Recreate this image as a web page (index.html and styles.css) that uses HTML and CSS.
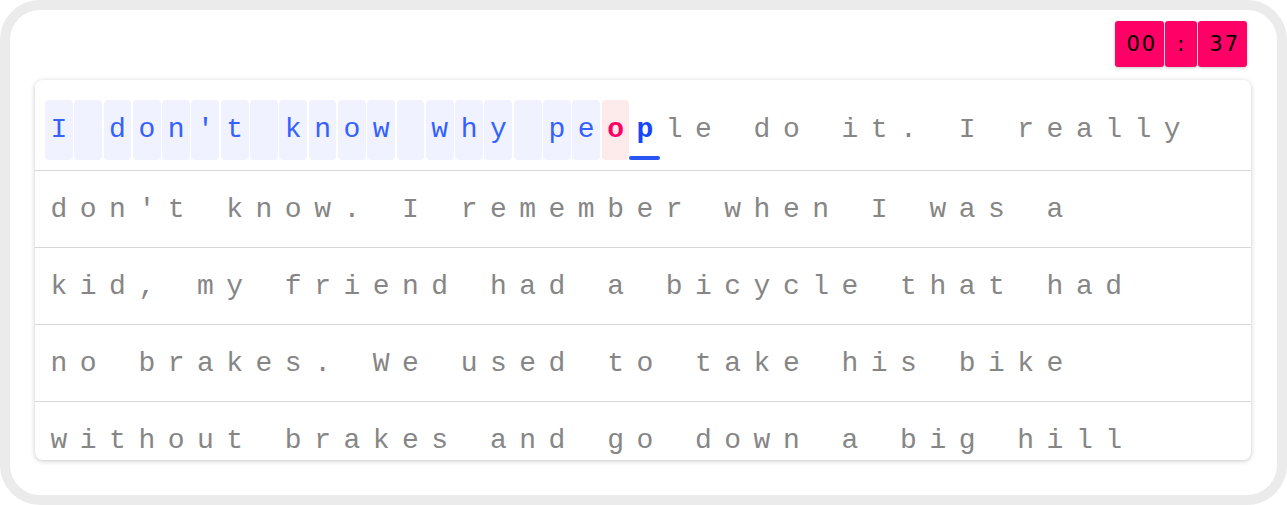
FILE: index.html
```html
<!DOCTYPE html>
<html lang="en">
<head>
<meta charset="utf-8">
<title>Typing test</title>
<link rel="stylesheet" href="styles.css">
</head>
<body>
<div class="frame">
  <div class="header">
    <div class="timer">
      <span class="seg">00</span>
      <span class="seg colon">:</span>
      <span class="seg">37</span>
    </div>
  </div>
  <div class="card">
    <div class="row first"><span class="done">I</span><span class="done"> </span><span class="done">d</span><span class="done">o</span><span class="done">n</span><span class="done">'</span><span class="done">t</span><span class="done"> </span><span class="done">k</span><span class="done">n</span><span class="done">o</span><span class="done">w</span><span class="done"> </span><span class="done">w</span><span class="done">h</span><span class="done">y</span><span class="done"> </span><span class="done">p</span><span class="done">e</span><span class="wrong">o</span><span class="current">p</span><span>l</span><span>e</span><span> </span><span>d</span><span>o</span><span> </span><span>i</span><span>t</span><span>.</span><span> </span><span>I</span><span> </span><span>r</span><span>e</span><span>a</span><span>l</span><span>l</span><span>y</span></div>
    <div class="row"><span>d</span><span>o</span><span>n</span><span>'</span><span>t</span><span> </span><span>k</span><span>n</span><span>o</span><span>w</span><span>.</span><span> </span><span>I</span><span> </span><span>r</span><span>e</span><span>m</span><span>e</span><span>m</span><span>b</span><span>e</span><span>r</span><span> </span><span>w</span><span>h</span><span>e</span><span>n</span><span> </span><span>I</span><span> </span><span>w</span><span>a</span><span>s</span><span> </span><span>a</span></div>
    <div class="row"><span>k</span><span>i</span><span>d</span><span>,</span><span> </span><span>m</span><span>y</span><span> </span><span>f</span><span>r</span><span>i</span><span>e</span><span>n</span><span>d</span><span> </span><span>h</span><span>a</span><span>d</span><span> </span><span>a</span><span> </span><span>b</span><span>i</span><span>c</span><span>y</span><span>c</span><span>l</span><span>e</span><span> </span><span>t</span><span>h</span><span>a</span><span>t</span><span> </span><span>h</span><span>a</span><span>d</span></div>
    <div class="row"><span>n</span><span>o</span><span> </span><span>b</span><span>r</span><span>a</span><span>k</span><span>e</span><span>s</span><span>.</span><span> </span><span>W</span><span>e</span><span> </span><span>u</span><span>s</span><span>e</span><span>d</span><span> </span><span>t</span><span>o</span><span> </span><span>t</span><span>a</span><span>k</span><span>e</span><span> </span><span>h</span><span>i</span><span>s</span><span> </span><span>b</span><span>i</span><span>k</span><span>e</span></div>
    <div class="row"><span>w</span><span>i</span><span>t</span><span>h</span><span>o</span><span>u</span><span>t</span><span> </span><span>b</span><span>r</span><span>a</span><span>k</span><span>e</span><span>s</span><span> </span><span>a</span><span>n</span><span>d</span><span> </span><span>g</span><span>o</span><span> </span><span>d</span><span>o</span><span>w</span><span>n</span><span> </span><span>a</span><span> </span><span>b</span><span>i</span><span>g</span><span> </span><span>h</span><span>i</span><span>l</span><span>l</span></div>
  </div>
</div>
</body>
</html>
```
FILE: styles.css
```css
* { box-sizing: border-box; }
html, body { margin: 0; padding: 0; background: #ffffff; }
.frame {
  width: 1287px;
  height: 505px;
  border: 10px solid #ebebeb;
  border-radius: 40px;
  background: #ffffff;
  padding: 0 26px 0 25px;
  overflow: hidden;
}
.header {
  display: flex;
  justify-content: flex-end;
  padding: 11px 4px 0 0;
  margin-bottom: 13px;
}
.timer { display: flex; gap: 1px; }
.seg {
  height: 46px;
  line-height: 46px;
  padding: 0 7px 0 11px;
  background: #ff0066;
  color: #000;
  font-family: "DejaVu Sans", Verdana, sans-serif;
  font-size: 21px;
  letter-spacing: 2px;
  border-radius: 3px;
  box-shadow: 0 1px 3px rgba(0,0,0,0.22);
}
.seg.colon { padding: 0 11px 0 12px; }
.card {
  height: 380px;
  border-radius: 8px;
  background: #fff;
  box-shadow: 0 1px 5px rgba(0,0,0,0.22);
  padding-top: 10px;
  overflow: hidden;
}
.row {
  padding: 11px 10px 9px;
  border-bottom: 1px solid #d6d6d6;
  white-space: pre;
  font-family: "Liberation Mono", "Courier New", monospace;
  font-size: 28px;
  line-height: 56px;
  height: 77px;
  color: #868686;
}
.row.first { line-height: 60px; height: 81px; padding: 10px; }
.row > span {
  display: inline-block;
  vertical-align: top;
  width: 27.8px;
  margin-right: 1.5px;
  text-align: center;
  border-radius: 4px;
  position: relative;
}
.row.first > span { height: 60px; }
.row > .done { background: #f0f3ff; color: #3561ff; }
.row > .wrong { background: #fdeaea; color: #ff0066; font-weight: bold; }
.row > .current { color: #1545ff; font-weight: bold; }
.row > .current::after {
  content: "";
  position: absolute;
  left: -2px;
  right: -1px;
  bottom: 0;
  height: 4px;
  border-radius: 2px;
  background: #2a55f5;
}
```
